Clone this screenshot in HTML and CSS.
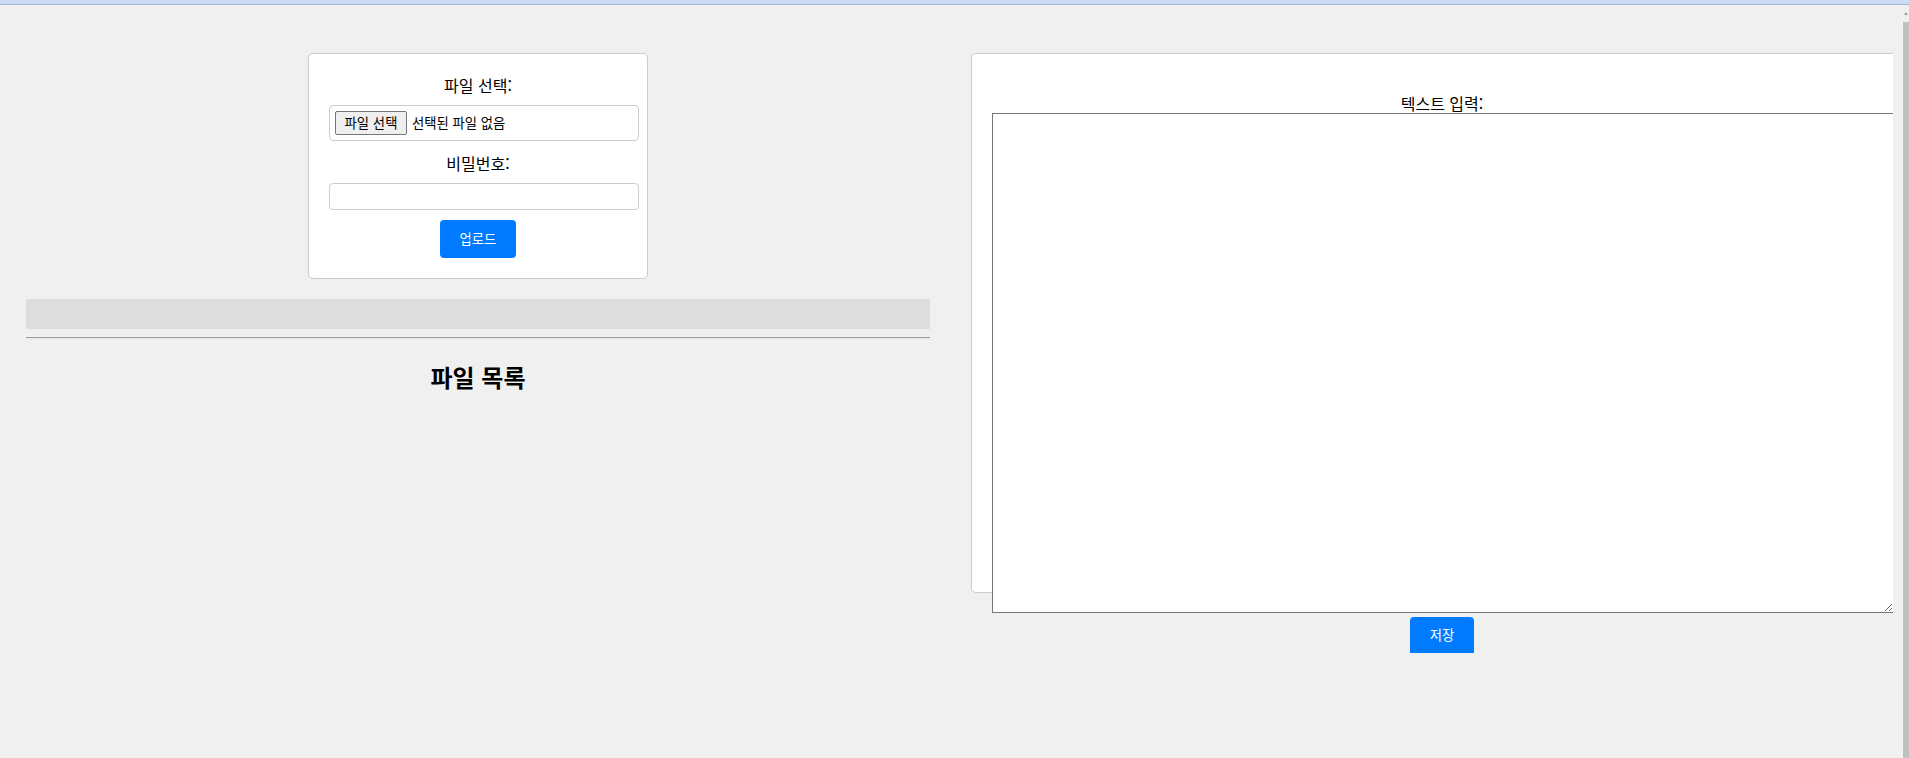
FILE: index.html
```html
<!DOCTYPE html>
<html lang="ko">
<head>
<meta charset="utf-8">
<title>파일 업로드</title>
<link rel="stylesheet" href="styles.css">
</head>
<body>
<div class="top-strip"></div>
<div class="page">
  <div class="main">
    <div class="left-col">
      <form class="card upload-card">
        <label class="field-label">파일 선택:</label>
        <div class="file-input">
          <span class="file-btn">파일 선택</span>
          <span class="file-name">선택된 파일 없음</span>
        </div>
        <label class="field-label">비밀번호:</label>
        <input class="pw-input" type="password">
        <button class="btn upload-btn" type="button">업로드</button>
      </form>
      <div class="progress-bar"></div>
      <hr class="divider">
      <h2 class="list-title">파일 목록</h2>
    </div>
    <div class="right-col">
      <div class="card text-card">
        <label class="text-label">텍스트 입력:</label>
        <textarea class="text-area"></textarea>
        <button class="btn save-btn" type="button">저장</button>
      </div>
    </div>
  </div>
</div>
<div class="scroll-arrow"></div>
<div class="scroll-thumb"></div>
</body>
</html>
```

FILE: styles.css
```css
html, body {
  margin: 0;
  padding: 0;
  overflow: hidden;
}
body {
  background: #f0f0f0;
  font-family: "Noto Sans CJK KR", "Noto Sans", sans-serif;
  color: #000;
}
.top-strip {
  height: 4px;
  background: #cbdbf4;
  border-bottom: 1px solid #a2b5d4;
}
.page {
  width: 1893px;
  height: 753px;
  overflow: hidden;
}
.main {
  display: flex;
  align-items: flex-start;
  gap: 41px;
  padding: 48px 0 0 26px;
}
.left-col {
  flex: 0 0 904px;
  width: 904px;
  display: flex;
  flex-direction: column;
  align-items: center;
}
.card {
  background: #fff;
  border: 1px solid #cccccc;
  border-radius: 5px;
  padding: 20px;
}
.upload-card {
  width: 298px;
  margin: 0;
  display: flex;
  flex-direction: column;
  align-items: flex-start;
}
.field-label {
  display: block;
  align-self: stretch;
  font-size: 16px;
  line-height: 23px;
  margin-bottom: 8px;
  text-align: center;
}
.file-input {
  flex: 0 0 auto;
  width: 298px;
  padding: 5px;
  border: 1px solid #cccccc;
  border-radius: 4px;
  display: flex;
  align-items: center;
  gap: 5px;
  margin-bottom: 11px;
  font-size: 13.33px;
}
.file-btn {
  box-sizing: border-box;
  height: 24px;
  width: 72px;
  display: flex;
  align-items: center;
  justify-content: center;
  background: #efefef;
  border: 1px solid #767676;
  border-radius: 2px;
  font-size: 13.33px;
  line-height: 16px;
}
.file-name {
  font-size: 13.33px;
  line-height: 16px;
}
.pw-input {
  flex: 0 0 auto;
  box-sizing: border-box;
  width: 310px;
  height: 27px;
  padding: 5px;
  border: 1px solid #cccccc;
  border-radius: 4px;
  margin: 0 0 10px 0;
  background: #fff;
  font-size: 13.33px;
}
.btn {
  background: #007bff;
  color: #fff;
  border: none;
  padding: 10px 20px;
  font-family: "Noto Sans CJK KR", "Noto Sans", sans-serif;
  font-size: 13.33px;
  cursor: pointer;
}
.upload-btn {
  align-self: center;
  line-height: 18px;
  border-radius: 4px;
}
.progress-bar {
  align-self: stretch;
  height: 30px;
  background: #dddddd;
  margin-top: 20px;
}
.divider {
  align-self: stretch;
  height: 0;
  margin: 8px 0 0 0;
  border: none;
  border-top: 1px solid #9d9d9d;
  border-bottom: 1px solid #e8e8e8;
}
.list-title {
  font-size: 24px;
  line-height: 35px;
  font-weight: bold;
  text-align: center;
  margin: 20px 0;
}
.right-col {
  flex: 0 0 auto;
}
.text-card {
  width: 900px;
  height: 498px;
  display: flex;
  flex-direction: column;
  align-items: center;
}
.text-label {
  display: block;
  font-size: 16px;
  line-height: 20px;
  margin-top: 19px;
  text-align: center;
}
.text-area {
  display: block;
  align-self: flex-start;
  box-sizing: border-box;
  flex: 0 0 500px;
  width: 902px;
  height: 500px;
  margin: 0;
  padding: 2px;
  border: 1px solid #767676;
  background: #fff;
  font-size: 13.33px;
}
.save-btn {
  margin-top: 4px;
  line-height: 16px;
  border-radius: 4px 4px 0 0;
  flex: 0 0 auto;
}
.scroll-thumb {
  position: fixed;
  top: 22px;
  right: 0;
  bottom: 0;
  width: 6px;
  background: #c1c1c1;
}
.scroll-arrow {
  position: fixed;
  top: 12px;
  right: 1px;
  width: 0;
  height: 0;
  border-left: 2px solid transparent;
  border-right: 2px solid transparent;
  border-bottom: 3px solid #a0a0a0;
}
```
